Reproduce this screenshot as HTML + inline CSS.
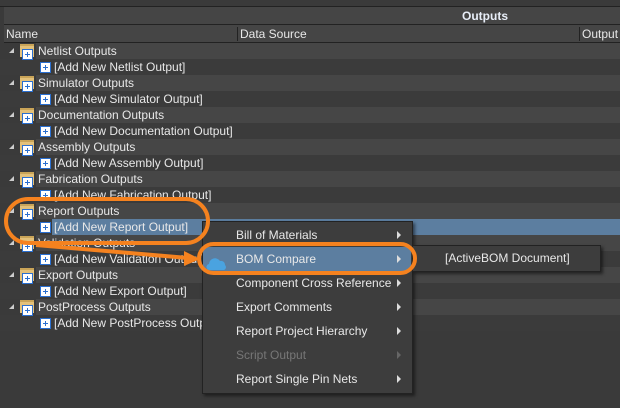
<html><head><style>
body{margin:0;width:620px;height:408px;background:#3a3a3a;font-family:"Liberation Sans",sans-serif;font-size:12px;color:#e8e8e8;position:relative;overflow:hidden}
.a{position:absolute;white-space:nowrap}
.row{position:absolute;left:0;width:620px;height:16px}
.g{background:#464646}.c{background:#3b3b3b}
.fold{position:absolute;width:14px;height:11px;background:#e3c17a;border-top:2px solid #c9a458}
.plus{position:absolute;width:9px;height:9px;background:#fff;border:1px solid #2a6fd0}
.plus:before{content:"";position:absolute;left:2px;top:4px;width:5px;height:1px;background:#2a6fd0}
.plus:after{content:"";position:absolute;left:4px;top:2px;width:1px;height:5px;background:#2a6fd0}
.tri{position:absolute;width:0;height:0;border-left:5px solid transparent;border-bottom:5px solid #ccc}
.mi{position:absolute;left:236px;font-size:12px}
.ar{position:absolute;left:397px;width:0;height:0;border-top:4px solid transparent;border-bottom:4px solid transparent;border-left:4px solid #ddd}
</style></head><body>
<div class="a" style="left:0;top:0;width:620px;height:6px;background:#3a3a3a;border-bottom:1px solid #222"></div>
<div class="a" style="left:4px;top:7px;width:616px;height:17px;background:#454545;border-bottom:1px solid #222"></div>
<div class="a" style="left:462px;top:9px;font-weight:bold;color:#e8eef8">Outputs</div>
<div class="a" style="left:4px;top:25px;width:616px;height:17px;background:#454545;border-bottom:1px solid #222"></div>
<div class="a" style="left:6px;top:27px">Name</div>
<div class="a" style="left:237px;top:27px;border-left:1px solid #222;padding-left:2px">Data Source</div>
<div class="a" style="left:579px;top:27px;border-left:1px solid #222;padding-left:2px">Output</div>
<div id="rows"></div>
<script>
var n=["Netlist","Simulator","Documentation","Assembly","Fabrication","Report","Validation","Export","PostProcess"];
var h="";
n.forEach(function(s,i){var y=43+i*32;
h+='<div class="row g" style="top:'+y+'px;left:36px;width:584px"></div>';
h+='<div class="row c" style="top:'+(y+16)+'px"></div>';
h+='<div class="tri" style="left:9px;top:'+(y+5)+'px"></div>';
h+='<div class="fold" style="left:20px;top:'+(y+1)+'px"></div><div class="plus" style="left:22px;top:'+(y+6)+'px"></div>';
h+='<div class="a" style="left:38px;top:'+(y+1)+'px">'+s+' Outputs</div>';
if(i==5)h+='<div class="a" style="left:52px;top:'+(y+16)+'px;width:568px;height:16px;background:#5c7ea0"></div>';
h+='<div class="plus" style="left:40px;top:'+(y+19)+'px"></div>';
h+='<div class="a" style="left:54px;top:'+(y+17)+'px">[Add New '+s+' Output]</div>';
});
document.getElementById("rows").innerHTML=h;
</script>
<div class="a" style="left:202px;top:221px;width:209px;height:171px;background:#3d3d3d;border:1px solid #222;box-shadow:2px 2px 3px rgba(0,0,0,.5)"></div>
<div class="a" style="left:203px;top:247px;width:208px;height:24px;background:#5c7ea0"></div>
<div class="a" style="left:412px;top:245px;width:187px;height:25px;background:#3d3d3d;border:1px solid #222;box-shadow:2px 2px 3px rgba(0,0,0,.5)"></div>
<div class="a" style="left:445px;top:251px">[ActiveBOM Document]</div>
<div class="mi" style="top:228px">Bill of Materials</div>
<div class="mi" style="top:252px">BOM Compare</div>
<div class="mi" style="top:276px">Component Cross Reference</div>
<div class="mi" style="top:300px">Export Comments</div>
<div class="mi" style="top:324px">Report Project Hierarchy</div>
<div class="mi" style="top:348px;color:#777">Script Output</div>
<div class="mi" style="top:372px">Report Single Pin Nets</div>
<div class="ar" style="top:231px"></div><div class="ar" style="top:255px"></div><div class="ar" style="top:279px"></div><div class="ar" style="top:303px"></div><div class="ar" style="top:327px"></div><div class="ar" style="top:351px;border-left-color:#666"></div><div class="ar" style="top:375px"></div>
<svg class="a" style="left:0;top:0" width="620" height="408">
<path d="M209 264a6 6 0 0 1 11-3a4 4 0 0 1 5 4a3 3 0 0 1-1 5h-14a3 3 0 0 1-1-6z" fill="#4aa3e0"/>
<rect x="6" y="199" width="202" height="44" rx="22" fill="none" stroke="#f5821f" stroke-width="4"/>
<rect x="199" y="244" width="216" height="29" rx="14.5" fill="none" stroke="#f5821f" stroke-width="4"/>
<path d="M36 245 L188 258" stroke="#f5821f" stroke-width="4"/>
<path d="M184 251 L200 259 L184 266z" fill="#f5821f"/>
</svg>
</body></html>
